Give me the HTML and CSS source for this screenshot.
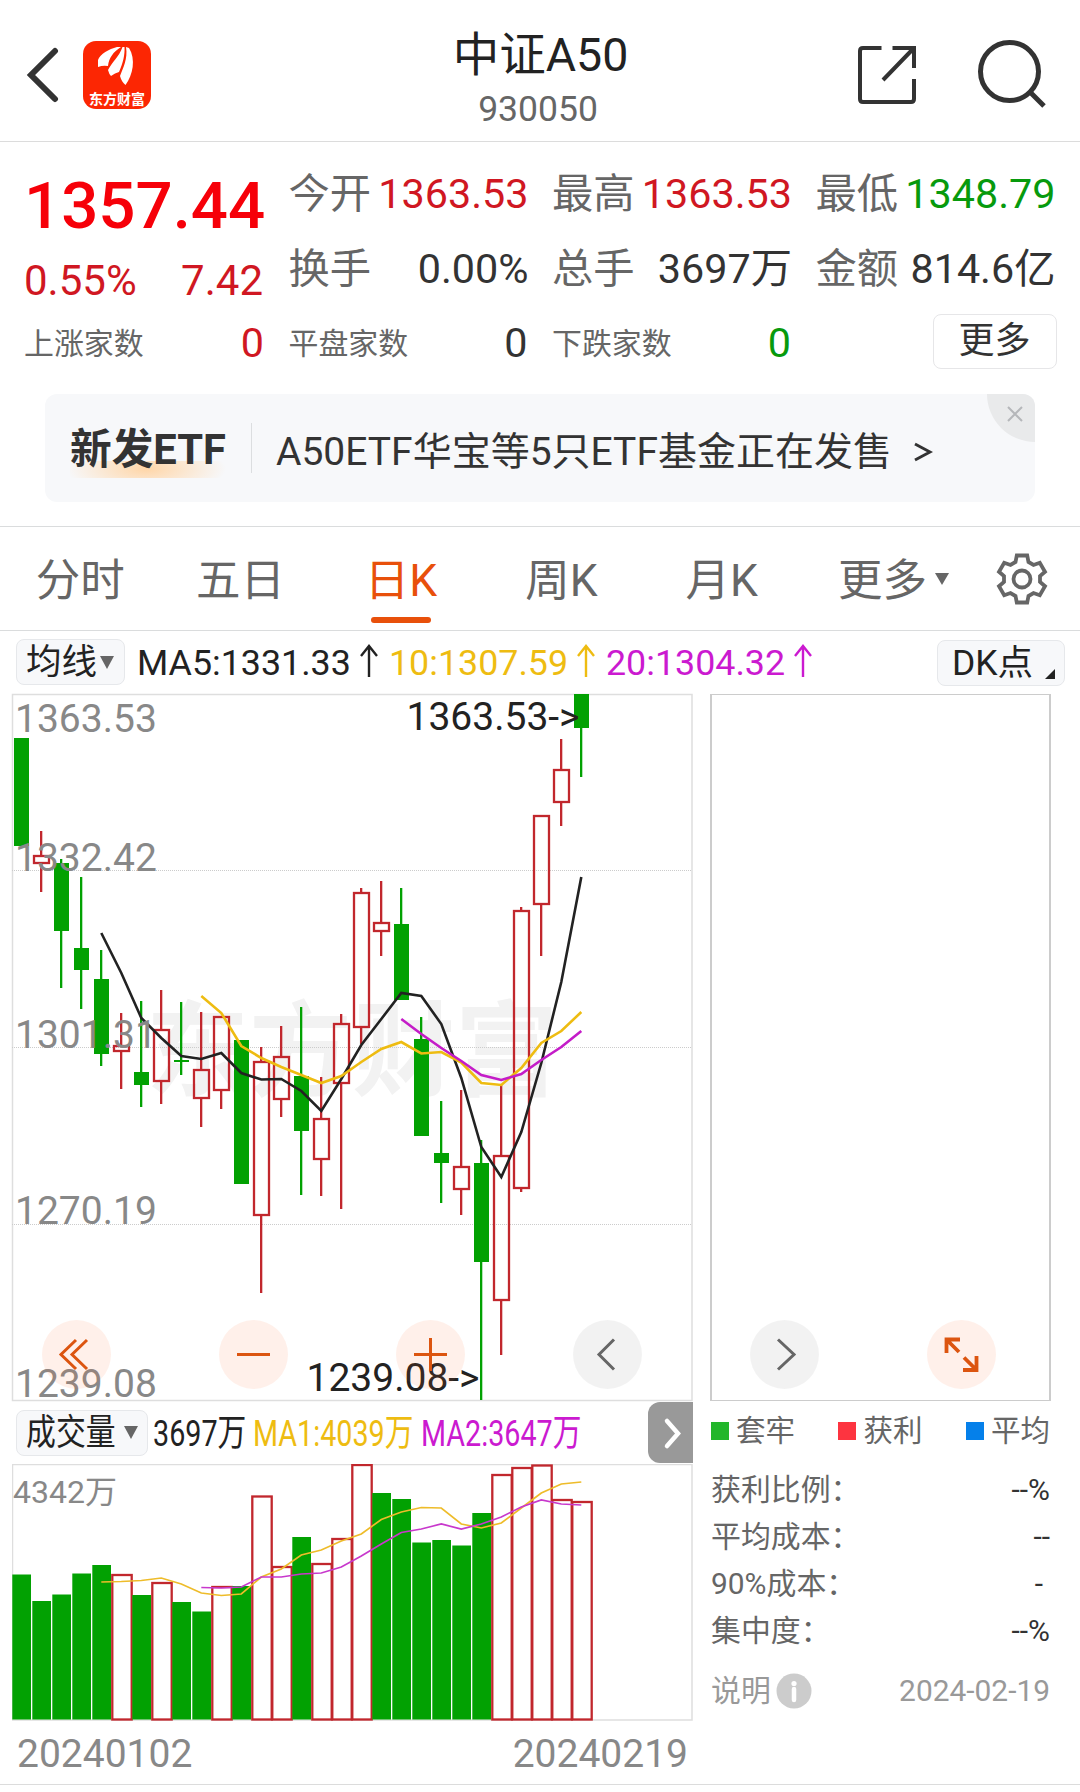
FILE: index.html
```html
<!DOCTYPE html>
<html lang="zh-CN">
<head>
<meta charset="utf-8">
<title>中证A50 930050</title>
<link rel="stylesheet" href="styles.css">
</head>
<body>
<header class="topbar">
  <div class="topbar-side">
    <svg class="back" width="34" height="56" viewBox="0 0 34 56"><path d="M29 4 5 28l24 24" fill="none" stroke="#333" stroke-width="6" stroke-linecap="round" stroke-linejoin="miter"/></svg>
    <svg class="logo" width="68" height="68" viewBox="0 0 68 68">
      <rect width="68" height="68" rx="13" fill="#fc2603"/>
      <path d="M34 6C26 8 17 13 15 19v7q5-2 10-1C26 17 30 11 38 6z" fill="#fff"/>
      <path d="M39.500 6C36 16 29 21 25 29q1 4 3 6 4-3 8-4c4-9 6-17 5.500-25z" fill="#fff"/>
      <path d="M43 6c2 12-3 21-6 29 1 4 3 7 5.500 9C50 34 53 18 46 7z" fill="#fff"/>
      <text class="logo-text" x="34" y="62.500" text-anchor="middle" textLength="56">东方财富</text>
    </svg>
  </div>
  <div class="topbar-title">
    <h1 class="name">中证A50</h1>
    <div class="code">930050</div>
  </div>
  <div class="topbar-side topbar-actions">
    <svg width="60" height="60" viewBox="0 0 60 60" fill="none" stroke="#333" stroke-width="4"><path d="M24.500 3H6q-3 0-3 3v48q0 3 3 3h48q3 0 3-3V34M35.500 3H57v20M56 4 26 35"/></svg>
    <svg width="70" height="70" viewBox="0 0 70 70" fill="none" stroke="#333"><circle cx="31.500" cy="31.500" r="29" stroke-width="5"/><path d="m52 52 14 14" stroke-width="5"/></svg>
  </div>
</header>

<section class="quote">
  <div class="quote-grid">
    <div class="price">1357.44</div>
    <div class="stat"><span>今开</span><b class="red">1363.53</b></div>
    <div class="stat"><span>最高</span><b class="red">1363.53</b></div>
    <div class="stat"><span>最低</span><b class="green">1348.79</b></div>
    <div class="change red"><b>0.55%</b><b>7.42</b></div>
    <div class="stat"><span>换手</span><b>0.00%</b></div>
    <div class="stat"><span>总手</span><b>3697万</b></div>
    <div class="stat"><span>金额</span><b>814.6亿</b></div>
    <div class="stat small"><span>上涨家数</span><b class="red">0</b></div>
    <div class="stat small"><span>平盘家数</span><b>0</b></div>
    <div class="stat small"><span>下跌家数</span><b class="green">0</b></div>
    <button class="more">更多</button>
  </div>
  <div class="promo">
    <strong class="promo-tag"><span>新发ETF</span></strong>
    <span class="promo-text">A50ETF华宝等5只ETF基金正在发售</span>
    <svg width="20" height="24" viewBox="0 0 20 24"><path d="m2 4 15 8-15 8" fill="none" stroke="#333" stroke-width="3"/></svg>
    <span class="promo-close"><svg width="18" height="18" viewBox="0 0 18 18"><path d="m2 2 14 14M16 2 2 16" stroke="#b5b7ba" stroke-width="2"/></svg></span>
  </div>
</section>

<nav class="tabs">
  <a class="tab">分时</a><a class="tab">五日</a><a class="tab active">日K</a><a class="tab">周K</a><a class="tab">月K</a>
  <a class="tab tab-more">更多<i class="caret"></i></a>
  <svg class="gear" width="52" height="52" viewBox="-26 -26 52 52" fill="none" stroke="#666" stroke-width="3.800"><circle r="8.500"/><path d="M-5.200-23.500H5.200L6.500-17 11.500-14 17.800-16.200 23-7.200 18-2.900V2.900L23 7.200 17.800 16.200 11.500 14 6.500 17 5.200 23.500H-5.200L-6.500 17-11.500 14-17.800 16.200-23 7.200-18 2.900V-2.900L-23-7.200-17.800-16.200-11.500-14-6.500-17z"/></svg>
</nav>

<main class="board">
  <div class="ma-bar">
    <button class="pill pill-ma">均线<i class="caret"></i></button>
    <span class="ma ma5">MA5:1331.33<svg width="36" height="34" viewBox="0 0 36 34"><path d="M18 33V3M10 12l8-10 8 10"/></svg></span>
    <span class="ma ma10">10:1307.59<svg width="36" height="34" viewBox="0 0 36 34"><path d="M18 33V3M10 12l8-10 8 10"/></svg></span>
    <span class="ma ma20">20:1304.32<svg width="36" height="34" viewBox="0 0 36 34"><path d="M18 33V3M10 12l8-10 8 10"/></svg></span>
    <button class="pill pill-dk">DK点<i class="corner"></i></button>
  </div>

  <div class="charts">
    <div class="left">
      <svg class="kline" width="681" height="707" viewBox="12 694 681 707">
        <text class="watermark" x="146" y="1088" textLength="412">东方财富</text>
        <rect x="12.500" y="694.500" width="679.500" height="706" fill="none" stroke="#dedede" stroke-width="1.500"/>
        <path d="M12 870.500H692M12 1047.500H692M12 1224.500H692" stroke="#ccc" stroke-dasharray="1 1"/>
        <g id="candles"></g>
        <polyline id="ma5" class="line" stroke="#222"/>
        <polyline id="ma10" class="line" stroke="#eebc11"/>
        <polyline id="ma20" class="line" stroke="#c41cc8"/>
        <g class="axis">
          <text x="15" y="732">1363.53</text><text x="15" y="871">1332.42</text><text x="15" y="1048">1301.31</text><text x="15" y="1224">1270.19</text><text x="15" y="1397">1239.08</text>
        </g>
        <g class="mark"><text x="406.500" y="730">1363.53-&gt;</text><text x="306.500" y="1391">1239.08-&gt;</text></g>
      </svg>
      <div class="vol-bar">
        <button class="pill pill-vol"><span class="squeeze">成交量</span><i class="caret"></i></button>
        <span class="vol v0"><span>3697万</span></span>
        <span class="vol v1"><span>MA1:4039万</span></span>
        <span class="vol v2"><span>MA2:3647万</span></span>
        <span class="expand"><svg width="20" height="34" viewBox="0 0 20 34"><path d="m4 5 11 12.500L4 30" fill="none" stroke="#fff" stroke-width="4.500" stroke-linecap="round"/></svg></span>
      </div>
      <svg class="volume" width="681" height="257" viewBox="12 1464 681 257">
        <rect x="12.500" y="1464.500" width="679.500" height="255.500" fill="none" stroke="#dedede" stroke-width="1.500"/>
        <g id="bars"></g>
        <polyline id="vma1" class="thin" stroke="#eebc2a"/>
        <polyline id="vma2" class="thin" stroke="#c838cc"/>
        <text class="vol-max" x="13" y="1503">4342万</text>
      </svg>
      <div class="dates"><span>20240102</span><span>20240219</span></div>
    </div>

    <aside class="right">
      <div class="chips"></div>
      <div class="legend"><span><i class="k1"></i>套牢</span><span><i class="k2"></i>获利</span><span><i class="k3"></i>平均</span></div>
      <dl class="facts">
        <div><dt>获利比例：</dt><dd>--%</dd></div>
        <div><dt>平均成本：</dt><dd>--</dd></div>
        <div><dt>90%成本：</dt><dd class="dash">-</dd></div>
        <div><dt>集中度：</dt><dd>--%</dd></div>
      </dl>
      <div class="note"><span>说明</span><svg width="36" height="36" viewBox="0 0 36 36"><circle cx="18" cy="18" r="17.500" fill="#ccc"/><circle cx="18" cy="10.500" r="2.600" fill="#fff"/><path d="M18 16v11" stroke="#fff" stroke-width="4.500" stroke-linecap="round"/></svg><time>2024-02-19</time></div>
    </aside>

    <div class="controls">
      <svg class="warm" viewBox="0 0 69 69"><path d="M34 20 19 34.500 34 49M45 20 30 34.500 45 49"/></svg>
      <svg class="warm" viewBox="0 0 69 69"><path d="M18 34.500h33"/></svg>
      <svg class="warm" viewBox="0 0 69 69"><path d="M18 34.500h33M34.500 18v33"/></svg>
      <svg class="cool" viewBox="0 0 69 69"><path d="M41 19.500 26 34.500l15 15"/></svg>
      <svg class="cool" viewBox="0 0 69 69"><path d="m28 19.500 16 15-16 15"/></svg>
      <svg class="warm bold" viewBox="0 0 69 69"><path d="M33 19.500H19.500V33M20 20l12 12M36 50h13.500V36M49 49.500 37 37.500"/></svg>
    </div>
  </div>
</main>
<script src="chart.js"></script>
</body>
</html>
```
FILE: styles.css
```css
* { box-sizing: border-box; }
body {
  margin: 0; width: 1080px; height: 1792px; overflow: hidden; background: #fff; color: #333;
  font-family: Roboto, "Noto Sans CJK SC", sans-serif;
}
svg { display: block; flex: none; }
i { font-style: normal; }
button { font: inherit; color: inherit; padding: 0; margin: 0; }
.red { color: #d01722; }
.green { color: #079a0d; }
.caret { display: inline-block; border: 7.500px solid transparent; border-top: 13px solid #666; border-bottom: 0; }

.topbar { height: 142px; display: grid; grid-template-columns: 300px 1fr 300px; border-bottom: 1.500px solid #dcdcdc; }
.topbar-side { display: flex; align-items: center; padding: 8px 0 0 26px; }
.logo { margin-left: 23px; }
.logo-text { font: 700 14px "Noto Sans CJK SC", sans-serif; fill: #fff; }
.topbar-title { text-align: center; padding: 25px 0 0 1px; }
.name { margin: 0; font-size: 46.500px; font-weight: 400; line-height: 60px; color: #222; }
.code { font-size: 35.500px; line-height: 49px; color: #666; margin-left: -5px; }
.topbar-actions { padding: 8px 0 0 77px; gap: 61px; }

.quote { height: 385px; padding: 15px 24px 0; border-bottom: 1.500px solid #dadcdd; }
.quote-grid { display: grid; grid-template-columns: 239px 238px 238px 238px; column-gap: 25.500px; grid-template-rows: 75px 75px 75px; }
.price { font-size: 65.400px; font-weight: 500; color: #f60009; line-height: 98px; white-space: nowrap; }
.stat, .change { display: flex; justify-content: space-between; line-height: 75px; white-space: nowrap; font-size: 41.300px; }
.change { line-height: 98px; margin: 0; font-size: 42px; }
.stat b, .change b { font-weight: 400; }
.stat b { margin-right: -2px; }
.stat span { color: #666; }
.small { line-height: 73px; }
.small span { font-size: 29.900px; }
.small b { margin-right: -1px; }
.more { width: 124px; height: 55px; margin: 7px -3px 0 0; justify-self: end; background: #fff; border: 1.500px solid #e6e6e8; border-radius: 8px; font-size: 36px; line-height: 47px; }
.promo { position: relative; height: 108px; margin: 12px 21px 0; padding-left: 25px; border-radius: 12px; background: #f7f8fa; display: flex; align-items: center; overflow: hidden; }
.promo-tag { width: 182px; height: 50px; font-size: 41.700px; line-height: 54px; white-space: nowrap; border-right: 1.500px solid #dcdee0; }
.promo-tag span { display: block; height: 56px; background: radial-gradient(ellipse 80px 26px at 76px 8px, #ffd6a8, transparent) 0 38px / 156px 17px no-repeat; }
.promo-text { margin: 7px 22px 0 24px; width: 615px; font-size: 39px; line-height: 48px; white-space: nowrap; }
.promo > svg { margin-top: 8px; }
.promo-close { position: absolute; top: 0; right: 0; width: 48px; height: 48px; border-bottom-left-radius: 48px; background: #e9eaeb; display: flex; align-items: center; justify-content: center; padding: 0 0 8px 8px; }

.tabs { height: 104px; display: flex; align-items: center; border-bottom: 1.500px solid #dadcdd; color: #666; }
.tab { position: relative; width: 160.400px; text-align: center; font-size: 44.500px; line-height: 97px; padding-top: 5px; white-space: nowrap; }
.active { color: #e8500b; }
.active::after { content: ""; position: absolute; left: 50px; bottom: 7px; width: 60px; height: 6px; border-radius: 3px; background: #e8500b; }
.tab-more { width: 194px; padding-left: 36px; text-align: left; display: flex; align-items: center; gap: 8px; }
.tab-more .caret { border-width: 12px 7.500px 0; margin-bottom: 5px; }

.ma-bar { height: 63px; padding: 0 15px 0 16px; display: flex; align-items: center; font-size: 35.800px; line-height: 44px; white-space: nowrap; }
.pill { height: 46px; border: 1.500px solid #e6e8eb; border-radius: 8px; background: #f7f8fa; color: #222; display: flex; align-items: center; line-height: 42px; white-space: nowrap; }
.pill-ma { width: 109px; padding-left: 9px; gap: 3px; font-size: 35.500px; margin-top: -1px; }
.ma { display: inline-flex; align-items: center; }
.ma svg { margin-top: -3px; fill: none; stroke: currentColor; stroke-width: 2.400; }
.ma5 { width: 252px; margin-left: 12px; color: #222; }
.ma10 { width: 217px; color: #eebc11; }
.ma20 { color: #cb1ad0; }
.pill-dk { width: 128px; margin-left: auto; padding-left: 14px; font-size: 35.500px; gap: 12px; }
.corner { border: 5.500px solid #222; border-top-color: transparent; border-left-color: transparent; align-self: flex-end; margin-bottom: 6px; }

.charts { position: relative; display: flex; padding-left: 12px; }
.left { width: 681px; }
.kline { overflow: visible; }
.watermark { font: 700 103px "Noto Sans CJK SC", sans-serif; fill: #f2f2f2; }
.line { fill: none; stroke-width: 2.600; }
.thin { fill: none; stroke-width: 1.700; }
.axis text { font-size: 39px; fill: #888; }
.mark text { font-size: 39px; fill: #222; }
.vol-bar { height: 63px; display: flex; align-items: center; padding-left: 4px; }
.pill-vol { width: 132px; padding-left: 9px; font-size: 36px; gap: 8px; }
.squeeze { display: block; width: 90px; transform: scaleX(.83); transform-origin: 0 50%; }
.vol { font-size: 37.300px; line-height: 50px; white-space: nowrap; }
.vol span { display: block; transform: scaleX(.77); transform-origin: 0 50%; }
.v0 { width: 100px; margin-left: 5px; color: #222; }
.v1 { width: 168px; color: #eebc11; }
.v2 { width: 168px; color: #cb1ad0; }
.expand { width: 45px; height: 61px; margin-left: auto; border-radius: 12px 0 0 12px; background: #999; display: flex; align-items: center; padding-left: 15px; }
.vol-max { font-size: 32px; fill: #888; }
.dates { height: 63px; display: flex; justify-content: space-between; padding: 0 5px; font-size: 39px; line-height: 66px; color: #888; }
main { border-bottom: 1.500px solid #dcdcdc; }

.right { width: 341px; margin-left: 17px; }
.chips { height: 707px; border: 1.500px solid #ccc; border-width: 1px 2px; }
.legend { display: flex; justify-content: space-between; height: 60px; font-size: 29.500px; line-height: 60px; color: #666; padding: 0 1px; }
.legend span { display: flex; align-items: center; gap: 7px; }
.legend i { width: 18px; height: 18px; }
.k1 { background: #22b62b; }
.k2 { background: #fd3440; }
.k3 { background: #0580ea; }
.facts { margin: 5px 1px 0 1px; font-size: 29.900px; line-height: 47px; }
.facts div { display: flex; justify-content: space-between; }
.facts dt { color: #666; }
.facts dd { margin: 0; }
.facts .dash { padding-right: 7px; }
.note { display: flex; align-items: center; margin: 17px 1px 0 1px; height: 40px; font-size: 29.900px; line-height: 40px; color: #999; gap: 5px; }
.note time { margin-left: auto; }

.controls { position: absolute; left: 42px; top: 626px; width: 954px; display: flex; justify-content: space-between; }
.controls svg { width: 69px; height: 69px; border-radius: 50%; fill: none; stroke-width: 3; }
.warm { background: rgba(255, 112, 50, .1); stroke: #dc5510; }
.cool { background: rgba(0, 0, 0, .05); stroke: #666; }
.controls .bold { stroke-width: 3.800; }
```
FILE: chart.js
```javascript
const NS = "http://www.w3.org/2000/svg";
const RED = "#c1272d", GREEN = "#02a102", STEP = 20;

// direction, body top, body bottom, high, low
const candles = [
  ["g",738,846,738,846],["r",855,864,831,892],["g",863,931,859,988],["g",948,970,877,1009],["g",979,1054,950,1066],
  ["r",1045,1052,1013,1089],["g",1072,1085,1001,1107],["r",1029,1082,990,1104],["g",1060,1062,1002,1075],["r",1069,1099,1012,1127],
  ["r",1016,1091,1016,1109],["g",1040,1184,1040,1184],["r",1061,1216,1047,1293],["r",1056,1100,1026,1117],["g",1076,1131,1007,1195],
  ["r",1118,1160,1077,1196],["r",1023,1084,1014,1209],["r",892,1028,888,1044],["r",922,932,881,956],["g",924,1000,888,1000],
  ["g",1039,1136,1017,1136],["g",1153,1163,1101,1203],["r",1166,1190,1090,1215],["g",1163,1262,1140,1400],["r",1155,1301,1085,1355],
  ["r",910,1189,907,1192],["r",815,905,815,956],["r",769,803,739,826],["g",694,728,694,777]
];
const volumeTops = [1574.5,1601,1594.5,1573.5,1565,1574,1595,1582,1602,1611.5,1586,1586,1495.5,1566,1537,1563,1538,1464,1493,1499,1542.5,1540,1545.5,1513,1474,1467,1464.5,1499,1501];
const hollow = new Set([5,7,10,12,13,15,16,17,24,25,26,27,28]);

function add(parent, tag, attrs) {
  const el = document.createElementNS(NS, tag);
  for (const k in attrs) el.setAttribute(k, attrs[k]);
  parent.appendChild(el);
}
function line(id, first, values) {
  document.getElementById(id).setAttribute("points", values.map((y, i) => `${21.3 + STEP * (first + i)},${y}`).join(" "));
}

const kline = document.getElementById("candles");
candles.forEach(([dir, top, bottom, high, low], i) => {
  const x = i * STEP;
  const color = dir === "g" ? GREEN : RED;
  if (high < top) add(kline, "rect", { x: x + 20, y: high, width: 2.3, height: top - high, fill: color });
  if (low > bottom) add(kline, "rect", { x: x + 20, y: bottom, width: 2.3, height: low - bottom, fill: color });
  if (dir === "g") add(kline, "rect", { x: x + 14, y: top, width: 15, height: bottom - top, fill: color });
  else add(kline, "rect", { x: x + 14, y: top + 1, width: 15, height: bottom - top - 2, fill: "none", stroke: color, "stroke-width": 2.3 });
});

const bars = document.getElementById("bars");
volumeTops.forEach((top, i) => {
  const x = 12 + i * STEP;
  if (hollow.has(i)) add(bars, "rect", { x: x + 0.3, y: top + 1, width: 19.4, height: 1718.5 - top, fill: "#fff", stroke: RED, "stroke-width": 2.3 });
  else add(bars, "rect", { x: x + 0.3, y: top, width: 18.7, height: 1719.5 - top, fill: GREEN });
});

line("ma5", 4, [933,973,1018,1038,1056,1059,1053,1073,1079.5,1079,1091,1111,1079,1045,1019,993,996,1024,1078,1147,1177,1132,1063,982,877]);
line("ma10", 9, [996,1013,1046,1058,1067,1075,1083,1076,1062,1049,1042,1053.5,1052,1062.5,1083,1085,1068,1043,1031,1012]);
line("ma20", 19, [1019,1034,1048,1061,1075,1080,1074,1060,1047,1031]);
line("vma1", 4, [1582,1581.5,1580.5,1578,1584,1593,1595.5,1594,1577,1569,1555,1550,1541,1534,1519.5,1512,1507.5,1508,1524,1528,1523,1508,1493,1484,1482]);
line("vma2", 9, [1587.5,1588,1587,1577,1577,1574,1573,1567,1556,1544,1532.5,1529,1524,1529,1524,1517,1507,1500,1504,1505]);
```
